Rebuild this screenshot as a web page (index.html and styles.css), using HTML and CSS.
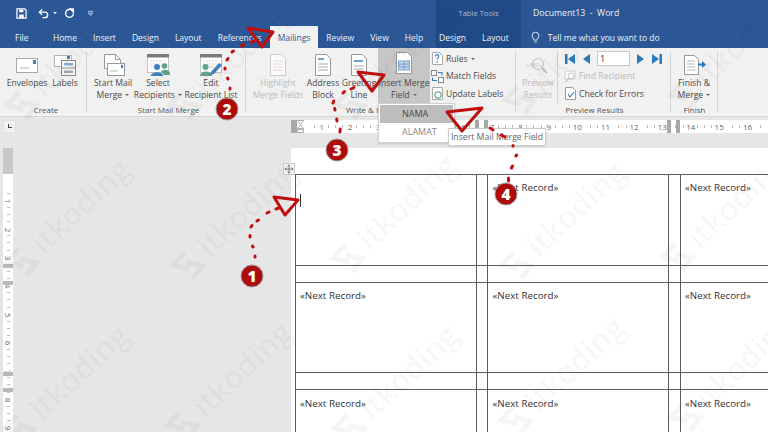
FILE: index.html
```html
<!DOCTYPE html>
<html lang="en">
<head>
<meta charset="utf-8">
<title>Document13 - Word</title>
<link rel="stylesheet" href="styles.css">
</head>
<body>
<div class="app">
  <header class="title-area">
    <div class="tools-band"></div>
    <div class="titlebar">
      <div class="qat">
        <svg class="q-save" viewBox="0 0 12 12"><path d="M1 1h8.500L11 2.500V11H1z" fill="none" stroke="#fff" stroke-width="1.300"/><path d="M3.500 1.500h4.500v3H3.500zM3.500 7h5v4h-5z" fill="#fff"/></svg>
        <svg class="q-undo" viewBox="0 0 12 12"><path d="M1.500 4.500H7.500a3 3 0 0 1 0 6H5M4.500 1.500l-3 3 3 3" fill="none" stroke="#fff" stroke-width="1.500"/></svg>
        <span class="q-caret"></span>
        <svg class="q-redo" viewBox="0 0 12 12"><path d="M8.800 2.600A4.300 4.300 0 1 0 10.300 6M6.800 1h3.400v3.400z" fill="none" stroke="#fff" stroke-width="1.500"/></svg>
        <svg class="q-more" viewBox="0 0 8 8"><path d="M1 1.500h6M1.500 3.500h5L4 6.500z" fill="none" stroke="#c6d4e8" stroke-width="1"/></svg>
      </div>
      <div class="tt-label">Table Tools</div>
      <div class="doc-name">Document13&nbsp; -&nbsp; Word</div>
    </div>
    <nav class="tabs">
      <span class="tab tab-file">File</span>
      <span class="tab">Home</span>
      <span class="tab">Insert</span>
      <span class="tab">Design</span>
      <span class="tab">Layout</span>
      <span class="tab">References</span>
      <span class="tab tab-on">Mailings</span>
      <span class="tab">Review</span>
      <span class="tab">View</span>
      <span class="tab">Help</span>
      <span class="tab">Design</span>
      <span class="tab">Layout</span>
      <svg class="bulb" viewBox="0 0 12 16"><path d="M4 11.500C4 9 1.500 8.500 1.500 5.500a4.500 4.500 0 0 1 9 0C10.500 8.500 8 9 8 11.500zM4.500 14h3" fill="none" stroke="#fff" stroke-width="1.100"/></svg>
      <span class="tell">Tell me what you want to do</span>
    </nav>
  </header>

  <section class="ribbon">
    <div class="group g-create">
      <div class="g-body">
        <div class="big w44">
          <svg class="ico" viewBox="0 0 24 24"><rect x="1.500" y="5.500" width="21" height="14" fill="#fff" stroke="#a8a8a8"/><rect x="18" y="7" width="3" height="4" fill="#3f7fbd"/><path d="M5 15h9" stroke="#b5b5b5"/></svg>
          <span class="lbl">Envelopes</span>
        </div>
        <div class="big w32">
          <svg class="ico" viewBox="0 0 24 24"><rect x="1.500" y="2.500" width="17" height="11" fill="#fff" stroke="#b5b5b5"/><rect x="14" y="3" width="3" height="3" fill="#3f7fbd"/><rect x="8.500" y="7.500" width="14" height="15" fill="#f4f4f4" stroke="#8a8a8a"/><path d="M9 15h13" stroke="#8a8a8a"/><rect x="11" y="10" width="9" height="2.500" fill="#8fadd0"/><rect x="11" y="17.500" width="9" height="2.500" fill="#a5a5a5"/></svg>
          <span class="lbl">Labels</span>
        </div>
      </div>
      <div class="g-name">Create</div>
    </div>

    <div class="group g-start">
      <div class="g-body">
        <div class="big w44">
          <svg class="ico" viewBox="0 0 24 24"><path d="M3.500 1.500h11l5 5v9h-16z" fill="#fff" stroke="#999"/><path d="M14.500 1.500v5h5" fill="none" stroke="#999"/><rect x="6.500" y="10.500" width="17" height="12" fill="#fff" stroke="#999"/><rect x="20" y="12" width="2" height="3" fill="#3f7fbd"/><path d="M9 18h8" stroke="#b5b5b5"/></svg>
          <span class="lbl">Start Mail</span>
          <span class="lbl">Merge <i class="caret"></i></span>
        </div>
        <div class="big w46">
          <svg class="ico" viewBox="0 0 24 24"><rect x="1.500" y="1.500" width="21" height="18" fill="#fff" stroke="#c4c4c4"/><rect x="1" y="1" width="22" height="3.500" fill="#7a7a7a"/><path d="M4 8h16M4 11h16M4 14h16" stroke="#d4d4d4" stroke-dasharray="2 1"/><circle cx="11" cy="14" r="3" fill="#3f7fbd"/><path d="M5 23c0-5 12-5 12 0z" fill="#3f7fbd"/><circle cx="18.500" cy="13" r="2.800" fill="#5fa387"/><path d="M15 19c1-3 8-3 9 1v2h-6z" fill="#5fa387"/></svg>
          <span class="lbl">Select</span>
          <span class="lbl">Recipients <i class="caret"></i></span>
        </div>
        <div class="big w60">
          <svg class="ico" viewBox="0 0 24 24"><rect x="1.500" y="1.500" width="21" height="18" fill="#fff" stroke="#c4c4c4"/><rect x="1" y="1" width="22" height="3.500" fill="#7a7a7a"/><path d="M4 8h16M4 11h16M4 14h16" stroke="#d4d4d4" stroke-dasharray="2 1"/><circle cx="6.500" cy="14" r="3" fill="#5fa387"/><path d="M1 23c0-6 12-6 12 0z" fill="#5fa387"/><path d="M12 19l8-9 3 2-8 9-4 1z" fill="#3f7fbd"/></svg>
          <span class="lbl">Edit</span>
          <span class="lbl">Recipient List</span>
        </div>
      </div>
      <div class="g-name">Start Mail Merge</div>
    </div>

    <div class="group g-write">
      <div class="g-body">
        <div class="big w54 off">
          <svg class="ico" viewBox="0 0 24 24"><path d="M4.500 1.500h11l4 4v17h-15z" fill="#fbfbfb" stroke="#d2caca"/><path d="M7 8h10M7 11h10M7 14h10M7 17h10" stroke="#e8d4d4"/></svg>
          <span class="lbl">Highlight</span>
          <span class="lbl">Merge Fields</span>
        </div>
        <div class="big w36">
          <svg class="ico" viewBox="0 0 24 24"><path d="M4.500 1.500h11l4 4v17h-15z" fill="#fff" stroke="#999"/><path d="M7 6h6" stroke="#3f7fbd" stroke-width="1.500"/><path d="M7 11h10M7 14h10M7 17h10" stroke="#aaa"/></svg>
          <span class="lbl">Address</span>
          <span class="lbl">Block</span>
        </div>
        <div class="big w36">
          <svg class="ico" viewBox="0 0 24 24"><path d="M4.500 1.500h11l4 4v17h-15z" fill="#fff" stroke="#999"/><path d="M7 8h9" stroke="#3f7fbd" stroke-width="1.500"/><path d="M7 13h10M7 16h10" stroke="#aaa"/></svg>
          <span class="lbl">Greeting</span>
          <span class="lbl">Line</span>
        </div>
        <div class="big w52 pressed">
          <svg class="ico" viewBox="0 0 24 24"><path d="M4.500 1.500h11l4 4v17h-15z" fill="#fff" stroke="#999"/><rect x="6.500" y="10" width="11" height="9" fill="#c5d9ee" stroke="#7ba3cf"/><path d="M6.500 13h11M6.500 16h11M12 10v9" stroke="#7ba3cf"/></svg>
          <span class="lbl">Insert Merge</span>
          <span class="lbl">Field <i class="caret"></i></span>
        </div>
        <div class="stack s-rules">
          <div class="row">
            <svg class="sm" viewBox="0 0 13 13"><path d="M1.500 .5h7l3 3v9h-10z" fill="#fff" stroke="#aaa"/><path d="M4.500 4.500c0-3 4-2 3 .5-.5 1-1.500 1-1.500 2.500M6 9.500v1.500" fill="none" stroke="#3f7fbd" stroke-width="1.200"/></svg>
            <span>Rules <i class="caret"></i></span>
          </div>
          <div class="row">
            <svg class="sm" viewBox="0 0 13 13"><rect x=".5" y=".5" width="5" height="5" fill="#fff" stroke="#888"/><rect x="7.500" y="7.500" width="5" height="5" fill="#fff" stroke="#888"/><path d="M7 2.500h4v3M6 10.500H1.500v-3" fill="none" stroke="#3f7fbd" stroke-width="1.100"/></svg>
            <span>Match Fields</span>
          </div>
          <div class="row">
            <svg class="sm" viewBox="0 0 13 13"><path d="M1.500 .5h10v12h-10z" fill="#fff" stroke="#aaa"/><circle cx="7" cy="8" r="3.200" fill="none" stroke="#6aa98c" stroke-width="1.200"/></svg>
            <span>Update Labels</span>
          </div>
        </div>
      </div>
      <div class="g-name">Write &amp; Insert Fields</div>
    </div>

    <div class="group g-preview">
      <div class="g-body">
        <div class="big w40 off">
          <svg class="ico" viewBox="0 0 24 24"><text x="0" y="14" class="abc">«ABC»</text><circle cx="12" cy="11" r="5.500" fill="none" stroke="#c4c4c4" stroke-width="1.200"/><path d="M16 15l5 5" stroke="#bbb" stroke-width="1.800"/></svg>
          <span class="lbl">Preview</span>
          <span class="lbl">Results</span>
        </div>
        <div class="nav-stack">
          <div class="row nav-row">
            <svg class="nav first" viewBox="0 0 10 10"><path d="M0 0h2.500v10H0zM10 0v10L3 5z" fill="#2b79b8"/></svg>
            <svg class="nav prev" viewBox="0 0 7 10"><path d="M7 0v10L0 5z" fill="#2b79b8"/></svg>
            <span class="rec-input">1</span>
            <svg class="nav next" viewBox="0 0 7 10"><path d="M0 0v10l7-5z" fill="#2b79b8"/></svg>
            <svg class="nav last" viewBox="0 0 10 10"><path d="M0 0v10l7-5zM7.500 0H10v10H7.500z" fill="#2b79b8"/></svg>
          </div>
          <div class="row off-row">
            <svg class="sm" viewBox="0 0 13 13"><path d="M1 1h10v8H1z" fill="#fff" stroke="#ccc"/><circle cx="7" cy="6" r="3" fill="none" stroke="#c4c4c4"/><path d="M5 8.500L1.500 12" stroke="#c4c4c4" stroke-width="1.300"/></svg>
            <span>Find Recipient</span>
          </div>
          <div class="row">
            <svg class="sm" viewBox="0 0 13 13"><path d="M1.500 .5h7l3 3v9h-10z" fill="#fff" stroke="#999"/><path d="M4 7l2 3 4-5" fill="none" stroke="#3f7fbd" stroke-width="1.200"/></svg>
            <span>Check for Errors</span>
          </div>
        </div>
      </div>
      <div class="g-name">Preview Results</div>
    </div>

    <div class="group g-finish">
      <div class="g-body">
        <div class="big w46">
          <svg class="ico" viewBox="0 0 24 24"><path d="M2.500 2.500h10l4 4v15h-14z" fill="#fff" stroke="#999"/><path d="M5 8h8M5 11h8M5 14h8M5 17h8" stroke="#b5b5b5"/><path d="M16 11.500h5" stroke="#2b79b8" stroke-width="2"/><path d="M20 8l4 3.500-4 3.500z" fill="#2b79b8"/></svg>
          <span class="lbl">Finish &amp;</span>
          <span class="lbl">Merge <i class="caret"></i></span>
        </div>
      </div>
      <div class="g-name">Finish</div>
    </div>
  </section>

  <main class="work">
    <div class="ruler-row">
      <span class="corner"><i></i></span>
      <div class="hruler">
        <span class="margin-l"><svg class="indent" viewBox="0 0 7 13"><path d="M.5.500h6L3.500 4.500.5 8.500h6L3.500 4.500zM.5 9.500h6v3h-6z" fill="#fff" stroke="#999" stroke-width=".8"/></svg></span>
        <span class="inch"><b>1</b></span><span class="inch"><b>2</b></span><span class="inch"><b>3</b></span><span class="inch"><b>4</b></span><span class="inch"><b>5</b></span><span class="inch"><b>6</b></span><span class="inch"><b>7</b></span><span class="inch"><b>8</b></span><span class="inch"><b>9</b></span><span class="inch"><b>10</b></span><span class="inch"><b>11</b></span><span class="inch"><b>12</b></span><span class="inch"><b>13</b></span><span class="inch"><b>14</b></span><span class="inch"><b>15</b></span><span class="inch"><b>16</b></span>
        <span class="h-mark hm1"></span><span class="h-mark hm2"></span>
      </div>
    </div>
    <div class="doc-row">
      <div class="vruler">
        <span class="v-top"></span>
        <span class="vinch"><b>1</b></span><span class="vinch"><b>2</b></span><span class="vinch"><b>3</b></span><span class="vinch"><b>4</b></span><span class="vinch"><b>5</b></span><span class="vinch"><b>6</b></span><span class="vinch"><b>7</b></span><span class="vinch"><b>8</b></span><span class="vinch"><b>9</b></span>
        <span class="v-mark vm1"></span><span class="v-mark vm2"></span><span class="v-mark vm3"></span><span class="v-mark vm4"></span>
      </div>
      <div class="page">
        <span class="move-handle">
          <svg viewBox="0 0 11 11"><path d="M5.500 1v9M1 5.500h9M4 2.500l1.500-1.500L7 2.500M4 8.500L5.500 10 7 8.500M2.500 4L1 5.500 2.500 7M8.500 4L10 5.500 8.500 7" fill="none" stroke="#555" stroke-width=".8"/></svg>
        </span>
        <table class="labels">
          <colgroup><col class="c-main"><col class="c-gap"><col class="c-main"><col class="c-gap"><col class="c-main"></colgroup>
          <tr class="r-main"><td><span class="caret-bar"></span></td><td></td><td>«Next Record»</td><td></td><td>«Next Record»</td></tr>
          <tr class="r-gap"><td></td><td></td><td></td><td></td><td></td></tr>
          <tr class="r-main r-short"><td>«Next Record»</td><td></td><td>«Next Record»</td><td></td><td>«Next Record»</td></tr>
          <tr class="r-gap"><td></td><td></td><td></td><td></td><td></td></tr>
          <tr class="r-main r-last"><td>«Next Record»</td><td></td><td>«Next Record»</td><td></td><td>«Next Record»</td></tr>
        </table>
      </div>
    </div>
  </main>

  <div class="menu">
    <div class="menu-item hot">NAMA</div>
    <div class="menu-item">ALAMAT</div>
  </div>
  <div class="tooltip">Insert Mail Merge Field</div>

  <svg class="overlay" viewBox="0 0 768 432">
    <defs>
      <g id="wm">
        <path class="wm-logo" d="M-3-13L-15 0 1 4M-2-3L14 1 4 14"/>
        <g transform="rotate(-43)"><text class="wm-text" x="20" y="10">itkoding</text></g>
      </g>
    </defs>
    <use href="#wm" x="22" y="105"/><use href="#wm" x="185" y="105"/><use href="#wm" x="350" y="105"/><use href="#wm" x="520" y="100"/><use href="#wm" x="685" y="95"/>
    <use href="#wm" x="22" y="262"/><use href="#wm" x="188" y="265"/><use href="#wm" x="348" y="258"/><use href="#wm" x="517" y="265"/><use href="#wm" x="678" y="257"/>
    <use href="#wm" x="20" y="428"/><use href="#wm" x="183" y="425"/><use href="#wm" x="350" y="428"/><use href="#wm" x="516" y="420"/><use href="#wm" x="686" y="417"/>

    <path class="dots" d="M255 257v-1M253 247l-.5-1M250 237v-1.500M251 227l1-1.500M257 221l1.500-1M267 213l2-1M276 209l3-1"/>
    <path class="head" d="M274 197L298 200 285 215z"/>
    <g class="badge"><circle cx="252" cy="276" r="11"/><text x="252" y="281.500">1</text></g>

    <path class="dots" d="M230 89v-1M228 79l-.5-1M225 69v-1M227 60l1-1.500M232 52l1.500-1M241 46l3-1.500M251 42l3-1"/>
    <path class="head" d="M248 28L273 32 262 47z"/>
    <g class="badge"><circle cx="227" cy="109" r="11"/><text x="227" y="114.500">2</text></g>

    <path class="dots" d="M340 132l.2-3M337 121l-.3-2M335 110l-.3-1.500M333 103l.8-2M343 93l1.500-1.500M351 89l3-1.500"/>
    <path class="head" d="M358 72L384 75 372 91z"/>
    <g class="badge"><circle cx="337" cy="150" r="11"/><text x="337" y="155.500">3</text></g>

    <path class="dots" d="M516 156l.5-1M511.500 168l1-2M508.500 181v-3M513 145.500v.5M490 128l3 2M501 135l4 2"/>
    <path class="head" d="M447 112L482 108 462 131z"/>
    <g class="badge"><circle cx="506" cy="194" r="11"/><text x="506" y="199.500">4</text></g>
  </svg>
</div>
</body>
</html>
```
FILE: styles.css
```css
* { box-sizing: border-box; }
html, body { margin: 0; padding: 0; }
body { width: 768px; height: 432px; overflow: hidden; font-family: "Open Sans", "Noto Sans", sans-serif; background: #e6e6e6; color: #444; }
.app { position: relative; width: 768px; height: 432px; overflow: hidden; display: flex; flex-direction: column; }

/* Title area */
.title-area { position: relative; height: 48px; background: #2b5797; color: #fff; flex: none; }
.tools-band { position: absolute; left: 436px; top: 0; width: 85px; height: 48px; background: #204a85; }
.titlebar { position: relative; height: 26px; display: flex; align-items: center; }
.qat { width: 436px; display: flex; align-items: center; padding-left: 16px; flex: none; }
.q-save { width: 11px; height: 11px; }
.q-undo { width: 11px; height: 11px; margin-left: 11px; }
.q-caret { width: 0; height: 0; margin-left: 4px; border: 2px solid transparent; border-top: 2.500px solid #fff; border-bottom: 0; }
.q-redo { width: 11px; height: 11px; margin-left: 7px; }
.q-more { width: 7px; height: 7px; margin-left: 12px; }
.tt-label { width: 85px; text-align: center; font-size: 7.600px; color: #a9bcd8; flex: none; }
.doc-name { margin-left: 12px; font-size: 8.700px; color: #eef2f8; }
.tabs { position: relative; height: 22px; display: flex; align-items: stretch; font-size: 8.500px; }
.tab { display: flex; align-items: center; padding: 0 8px; color: #f0f3f8; }
.tab-file { margin-left: 7px; margin-right: 8.500px; }
.tab-on { background: #f1f1f1; color: #2b5797; padding: 0 8px; }
.bulb { width: 9px; height: 13px; align-self: center; margin-left: 14px; }
.tell { margin-left: 8px; align-self: center; color: #eef2f8; }

/* Ribbon */
.ribbon { height: 69px; background: #f1f1f1; border-bottom: 1px solid #d6d6d6; display: flex; flex: none; font-size: 8.600px; color: #4a4a4a; }
.group { display: flex; flex-direction: column; position: relative; flex: none; }
.group::after { content: ""; position: absolute; right: 0; top: 4px; bottom: 4px; width: 1px; background: #d2d2d2; }
.g-body { height: 57px; display: flex; }
.g-name { height: 12px; line-height: 12px; text-align: center; font-size: 8px; color: #555; white-space: nowrap; overflow: hidden; }
.g-create { width: 87px; padding-left: 5px; }
.g-start { width: 159px; padding-left: 4px; }
.g-write { width: 270px; padding-left: 5px; }
.g-preview { width: 155px; padding-left: 2px; }
.g-finish { width: 47px; padding-left: 0; }
.big { display: flex; flex-direction: column; align-items: center; padding-top: 5px; height: 55px; white-space: nowrap; flex: none; }
.w32 { width: 32px; } .w36 { width: 36px; } .w40 { width: 40px; } .w44 { width: 44px; } .w46 { width: 46px; } .w52 { width: 52px; } .w54 { width: 54px; } .w60 { width: 60px; }
.ico { width: 24px; height: 24px; flex: none; }
.lbl { height: 12px; line-height: 12px; }
.off { color: #bababa; }
.pressed { background: #c6c6c6; margin-left: 1px; padding-top: 3px; }
.pressed .ico { margin-bottom: 2px; }
.caret { display: inline-block; width: 0; height: 0; margin-left: 1px; vertical-align: 2px; border: 2px solid transparent; border-top: 2.500px solid #666; border-bottom: 0; }
.stack { margin-left: 1px; padding-top: 2px; }
.nav-stack { margin-left: 6px; padding-top: 2px; position: relative; }
.nav-stack::before { content: ""; position: absolute; left: -7px; top: 2px; bottom: 0; width: 1px; background: #d2d2d2; }
.row { height: 17.500px; display: flex; align-items: center; white-space: nowrap; }
.sm { width: 13px; height: 13px; margin-right: 2px; flex: none; }
.off-row { color: #bababa; }
.nav { height: 10px; flex: none; }
.first, .last { width: 10px; }
.prev, .next { width: 7px; }
.prev { margin-left: 8px; }
.first { margin-left: 1px; }
.next { margin-left: 7px; }
.last { margin-left: 8px; }
.rec-input { width: 33px; height: 15px; margin-left: 7px; background: #fff; border: 1px solid #c8c8c8; font-size: 9px; line-height: 13px; padding-left: 2px; color: #333; }

/* Document area */
.work { flex: 1; display: flex; flex-direction: column; min-height: 0; background: #e6e6e6; }
.ruler-row { height: 31px; padding-top: 3px; display: flex; align-items: flex-start; flex: none; }
.corner { width: 13px; height: 13px; margin-left: 3px; background: #f1f1f1; border: 1px solid #e0e0e0; position: relative; flex: none; }
.corner i { position: absolute; left: 4px; top: 3px; width: 4px; height: 4px; border-left: 1px solid #444; border-bottom: 1px solid #444; }
.hruler { margin-left: 275px; flex: 1; height: 13px; background: #fff; display: flex; position: relative; overflow: hidden; font-size: 8px; color: #666; }
.margin-l { width: 16.500px; flex: none; background: linear-gradient(90deg, #a8a8a8 0 6px, #fff 6px); padding-left: 6px; }
.indent { display: block; width: 7px; height: 13px; }
.inch { width: 28.400px; flex: none; display: flex; justify-content: center; align-items: center; background: repeating-linear-gradient(90deg, transparent 0 6px, #bbb 6px 7px); background-size: 100% 3px; background-position: 0 5px; background-repeat: no-repeat; }
.inch b { font-weight: 400; background: #fff; padding: 0 2px; line-height: 13px; }
.h-mark { position: absolute; top: 0; height: 13px; width: 4px; background: #a8a8a8; }
.hm1 { left: 184px; box-shadow: 9px 0 0 #a8a8a8; }
.hm2 { left: 376px; box-shadow: 9px 0 0 #a8a8a8; }
.doc-row { flex: 1; display: flex; min-height: 0; }
.vruler { position: relative; width: 10px; margin-left: 3px; background: #fff; display: flex; flex-direction: column; flex: none; font-size: 8px; color: #666; }
.v-top { height: 26px; background: #c8c8c8; flex: none; margin-bottom: 13px; }
.vinch { height: 28.400px; flex: none; display: flex; align-items: center; justify-content: center; background: repeating-linear-gradient(180deg, transparent 0 6px, #bbb 6px 7px); background-size: 3px 100%; background-position: 4px 0; background-repeat: no-repeat; }
.vinch b { font-weight: 400; transform: rotate(90deg); background: #fff; padding: 0 2px; line-height: 10px; }
.v-mark { position: absolute; left: 0; width: 10px; height: 4px; background: #b8b8b8; }
.vm1 { top: 116px; } .vm2 { top: 133px; } .vm3 { top: 224px; } .vm4 { top: 240px; }
.page { position: relative; margin-left: 278px; flex: 1; background: #fff; padding: 26px 0 0 3.500px; min-width: 0; overflow: visible; }
.move-handle { position: absolute; left: -8px; top: 15px; width: 12px; height: 12px; background: #f5f5f5; border: 1px solid #c8c8c8; }
.move-handle svg { display: block; width: 10px; height: 10px; }
.labels { border-collapse: collapse; table-layout: fixed; width: 500px; font-family: "Open Sans", sans-serif; font-size: 9.800px; color: #333; }
.c-main { width: 181px; }
.c-gap { width: 11.500px; }
.labels td { border: 1px solid #5c5c5c; padding: 6px 4px 0 4.500px; vertical-align: top; white-space: nowrap; }
.r-main { height: 91px; }
.r-short { height: 90px; }
.r-last td { padding-top: 7px; }
.r-gap { height: 17px; }
.r-gap td { padding: 0; }
.caret-bar { display: block; width: 1px; height: 13px; margin-top: 13px; background: #333; }

/* Dropdown and tooltip */
.menu { position: absolute; left: 378px; top: 103px; width: 77px; background: #fff; border: 1px solid #d0d0d0; padding: 1px; box-shadow: 0 1px 2px rgba(0,0,0,.15); font-size: 9px; color: #888; }
.menu-item { height: 18px; line-height: 18px; padding-left: 22px; }
.hot { background: #bdbdbd; color: #4a4a4a; }
.tooltip { position: absolute; left: 448px; top: 128px; width: 98px; height: 18px; background: #fff; border: 1px solid #ccc; font-size: 8.700px; line-height: 16px; text-align: center; color: #666; box-shadow: 0 1px 2px rgba(0,0,0,.1); white-space: nowrap; }

/* Overlay: watermark and annotations */
.overlay { position: absolute; left: 0; top: 0; width: 768px; height: 432px; pointer-events: none; }
.wm-logo { fill: none; stroke: rgba(0,0,0,.04); stroke-width: 5; }
.wm-text { font-family: "Open Sans", sans-serif; font-weight: 600; font-size: 31px; fill: rgba(0,0,0,.035); }
.dots { fill: none; stroke: #c00d0d; stroke-width: 3; stroke-linecap: round; }
.head { fill: none; stroke: #c00d0d; stroke-width: 3; stroke-linejoin: round; }
.badge circle { fill: #ae0b0b; stroke: #9c9c9c; stroke-width: 1; }
.badge text { fill: #fff; font-family: "Open Sans", sans-serif; font-weight: 800; font-size: 15.500px; text-anchor: middle; }
.abc { font-size: 5.500px; fill: #c4c4c4; }
```
